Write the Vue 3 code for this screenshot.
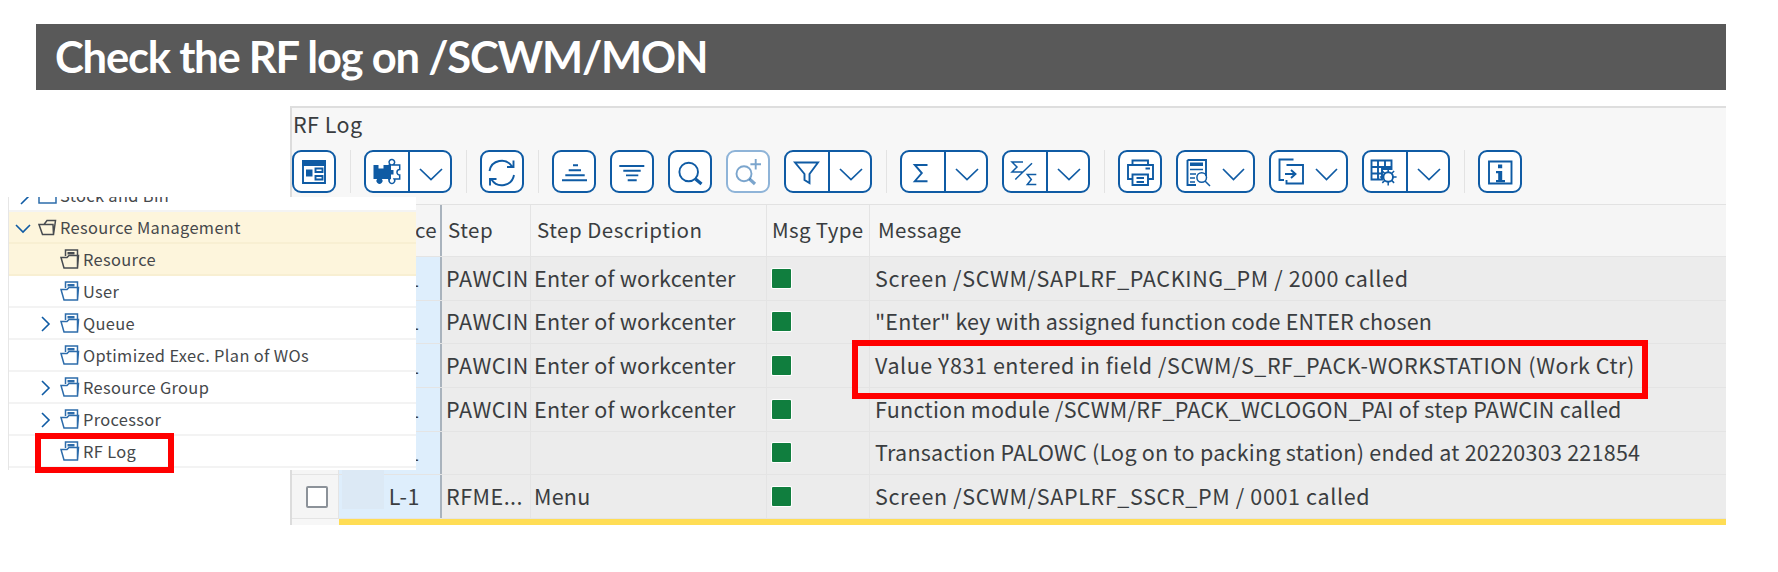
<script setup>
const S = 's', F = 'f'
const icons = {
  layout: [['M11 11h22v22H11z', S], ['M10 10h24v6H10z', F], ['M14 19.5h6.5v7H14z', F], ['M23.5 18.5h7v3.5h-7zM23.5 26h7v3.5h-7z', S]],
  puzzle: [
    ['M9.5 15h5v3.5h5V15h7.5v5h2.5v4.5H27V29h-9.2a3 3 0 1 1-4.6 0H9.5z', F],
    ['M27 15h-2.5M27.7 15a2.8 2.8 0 1 0-2-4.6a2.8 2.8 0 0 0 2 4.6h8v4.5a2.6 2.6 0 0 0 0 5.5V29h-5.5a2.8 2.8 0 1 1-4.6 0H24', 'n'],
  ],
  refresh: [['M9.5 21A12.3 12.3 0 0 1 32 16.5M33.5 10.5V17H27', S], ['M34 25A12.3 12.3 0 0 1 11.5 29.5M10 35.5V29h6.5', S]],
  up: [['M21 15.3h5M16.7 20.3h12.3M13.3 25.3h19.4M10 30.3h25', S]],
  down: [['M9.3 16h25M13.3 20.8h17.4M16 25.4h12.3M17.7 30.3h9', S]],
  search: [['M30 22a9.3 9.3 0 1 1-18.6 0a9.3 9.3 0 1 1 18.6 0z', S], ['M27.5 29l6 5', 't']],
  zoom: [['M25.5 23.7a7.5 7.5 0 1 1-15 0a7.5 7.5 0 1 1 15 0zM29.7 9v10.6M24.4 14.3H35', S], ['M23.5 29l5.5 5', 't']],
  filter: [['M11 12.5h23L25.5 24v9l-5-3v-6z', S]],
  sigma: [['M27.5 15H14.8L21.8 23l-7 8.2h12.7', S]],
  ratio: [['M21 12H10l5 5l-5 5h11M13.3 29.5L30 13.3M34.3 24.5h-9l4 5l-4 5h9', 'n']],
  print: [['M14.5 14.5v-4h15.5v4M14 29h-4V15h25v14h-5M14.5 24.5H30V35H14.5zM18.5 28H26M18.5 32H26', S], ['M27.5 17.5h4.5v2h-4.5z', F]],
  report: [['M11.5 10H30v16M20 35H11.5V10', S], ['M14 12.5h13v3.5H14z', F], ['M14 19.5h13M14 24h6M14 28h5M14 32h5', 'n'], ['M30.5 27.5a4.8 4.8 0 1 1-9.6 0a4.8 4.8 0 1 1 9.6 0zM29 31l5 5', 'n']],
  exportI: [['M24.5 9.5H10.5V30H15M17.5 15H34v18.5H17.5V30M16 24h10M22 20l4.5 4l-4.5 4', S]],
  grid: [['M9.5 10.5h20V19H20v10.5H9.5zM9.5 17h20M9.5 23.5H20M16 10.5v19M23 10.5V17', S], ['M31 27a4.8 4.8 0 1 1-9.6 0a4.8 4.8 0 1 1 9.6 0z', S], ['M26.2 18.5v3.6M26.2 31.8v3.6M17.8 27h3.6M31 27h3.6M20.3 21l2.5 2.5M29.6 30.4l2.5 2.5M32.1 21l-2.5 2.5M22.8 30.4l-2.5 2.5', 'n']],
  info: [['M11 11.5h22.5v22H11z', S], ['M20 14.5h4.2v3.8H20zM18 21h6.2v9H27v2.2h-9V30h2.2v-6.8H18z', F]],
}
const toolbar = [
  { icon: 'layout' }, { sep: true },
  { icon: 'puzzle', split: true }, { sep: true },
  { icon: 'refresh' }, { sep: true },
  { icon: 'up' }, { icon: 'down' }, { icon: 'search' }, { icon: 'zoom', off: true }, { icon: 'filter', split: true }, { sep: true },
  { icon: 'sigma', split: true }, { icon: 'ratio', split: true }, { sep: true },
  { icon: 'print' }, { icon: 'report', menu: true }, { icon: 'exportI', menu: true }, { icon: 'grid', split: true }, { sep: true },
  { icon: 'info' },
]
const rows = [
  { step: 'PAWCIN', desc: 'Enter of workcenter', msg: 'Screen /SCWM/SAPLRF_PACKING_PM / 2000 called', ls: 0.64 },
  { step: 'PAWCIN', desc: 'Enter of workcenter', msg: '"Enter" key with assigned function code ENTER chosen', ls: 0.18 },
  { step: 'PAWCIN', desc: 'Enter of workcenter', msg: 'Value Y831 entered in field /SCWM/S_RF_PACK-WORKSTATION (Work Ctr)', ls: 0.55 },
  { step: 'PAWCIN', desc: 'Enter of workcenter', msg: 'Function module /SCWM/RF_PACK_WCLOGON_PAI of step PAWCIN called', ls: 0.28 },
  { step: '', desc: '', msg: 'Transaction PALOWC (Log on to packing station) ended at 20220303 221854', ls: 0.25 },
  { step: 'RFME...', desc: 'Menu', msg: 'Screen /SCWM/SAPLRF_SSCR_PM / 0001 called', ls: 0.65, box: true },
]
const tree = [
  { label: 'Stock and Bin', lvl: 1, arrow: 'right', kind: 'box' },
  { label: 'Resource Management', lvl: 1, arrow: 'down', kind: 'folder', sel: true },
  { label: 'Resource', lvl: 2, sel: true },
  { label: 'User', lvl: 2 },
  { label: 'Queue', lvl: 2, arrow: 'right' },
  { label: 'Optimized Exec. Plan of WOs', lvl: 2 },
  { label: 'Resource Group', lvl: 2, arrow: 'right' },
  { label: 'Processor', lvl: 2, arrow: 'right' },
  { label: 'RF Log', lvl: 2 },
]
</script>

<template>
  <div class="page">
    <header class="banner"><h1>Check the RF log on /SCWM/MON</h1></header>

    <section class="window">
      <div class="wtitle">RF Log</div>
      <div class="toolbar">
        <template v-for="(b, i) in toolbar" :key="i">
          <span v-if="b.sep" class="sep"></span>
          <div v-else class="btn" :class="{ off: b.off, wide: b.menu, split: b.split }">
            <svg class="ico" viewBox="0 0 44 43" width="44" height="43">
              <path v-for="(p, j) in icons[b.icon]" :key="j" :d="p[0]" :class="p[1]" />
            </svg>
            <svg v-if="b.menu" class="chev menuchev" viewBox="0 0 30 43" width="30" height="43"><path d="M3 19l10.5 10.5L24 19" /></svg>
            <div v-if="b.split" class="drop">
              <svg class="chev" viewBox="0 0 40 39" width="40" height="39"><path d="M10 17l11 10.5L32 17" /></svg>
            </div>
          </div>
        </template>
      </div>

      <div class="table">
        <div class="row head">
          <div class="c c0"></div>
          <div class="c c1">Sequence</div>
          <div class="c c2">Step</div>
          <div class="c c3">Step Description</div>
          <div class="c c4">Msg Type</div>
          <div class="c c5">Message</div>
        </div>
        <div v-for="(r, i) in rows" :key="i" class="row">
          <div class="c c0"><span v-if="r.box" class="check"></span></div>
          <div class="c c1">L-1</div>
          <div class="c c2">{{ r.step }}</div>
          <div class="c c3">{{ r.desc }}</div>
          <div class="c c4"><span class="led"></span></div>
          <div class="c c5" :style="{ letterSpacing: r.ls + 'px' }">{{ r.msg }}</div>
        </div>
        <div class="endline"></div>
      </div>
      <div class="patch"></div>
    </section>

    <aside class="tree">
      <div v-for="t in tree" :key="t.label" class="node" :class="{ sel: t.sel, l2: t.lvl === 2 }">
        <svg v-if="t.arrow === 'down'" class="arrow adown" viewBox="0 0 16 10" width="16" height="10"><path d="M1 1l7 7l7-7" /></svg>
        <svg v-if="t.arrow === 'right'" class="arrow aright" viewBox="0 0 10 16" width="10" height="16"><path d="M1 1l7 7l-7 7" /></svg>
        <svg v-if="t.kind === 'box'" class="fold f1" viewBox="0 0 19 18" width="19" height="18"><path d="M1 1h17v16H1z" /></svg>
        <svg v-else-if="t.kind === 'folder'" class="fold f1" viewBox="0 0 19 18" width="19" height="18"><path d="M1 6.5h5l3-4h8.5l-2 14H4.5zM6 6.5h9l.5 10" /></svg>
        <svg v-else class="fold" viewBox="0 0 20 20" width="20" height="20"><path d="M5.5 7V1h12v17M1 8.5h6l2-2h9.5L17.5 19H4z" /><path class="band" d="M7.5 3h7v2.5h-7z" /></svg>
        <span class="lbl">{{ t.label }}</span>
      </div>
    </aside>

    <div class="mark mark-log"></div>
    <div class="mark mark-msg"></div>
  </div>
</template>

<style scoped>
.page { position: relative; width: 1778px; height: 572px; background: #fff; overflow: hidden; font-family: "Noto Sans CJK JP", "Noto Sans", sans-serif; color: #3a3d40; }
.banner { margin: 24px 52px 0 36px; height: 66px; background: #595959; display: flex; align-items: center; padding-left: 19px; }
.banner h1 { margin: 0; font: 700 43.5px/1 Lato, sans-serif; color: #fff; letter-spacing: -1.2px; }
.window { position: relative; margin: 16px 52px 0 290px; border-top: 2px solid #dedede; border-left: 2px solid #dcdcdc; background: #f7f7f7; height: 417px; }
.wtitle { height: 42px; padding-left: 1px; font-size: 21.5px; line-height: 31px; letter-spacing: 0.45px; }
.toolbar { display: flex; gap: 14px; height: 43px; }
.sep { width: 1px; margin-right: -1px; background: #e3e3e3; }
.btn { box-sizing: border-box; flex: none; width: 44px; height: 43px; display: flex; border: 2px solid #0f5ba4; border-radius: 9px; background: #fff; }
.btn.split { width: 88px; }
.btn.wide { width: 79px; }
.btn.off { border-color: #8fb4d8; }
.btn.off .ico path { opacity: 0.55; }
.ico { margin: -2px 0 -2px -2px; flex: none; }
.ico path { fill: none; stroke: #0f5ba4; stroke-width: 1.9; }
.ico path.n { stroke-width: 1.5; }
.ico path.t { stroke-width: 3.2; }
.ico path.f { fill: #0f5ba4; stroke: none; }
.chev { flex: none; display: block; }
.chev path { fill: none; stroke: #0f5ba4; stroke-width: 1.7; }
.menuchev { margin: -2px 0; }
.drop { box-sizing: border-box; width: 42px; height: 39px; border-left: 2px solid #0f5ba4; }
.table { margin-top: 11px; border-top: 1px solid #e2e2e2; }
.row { display: flex; height: 43.67px; box-sizing: border-box; background: #ececec; border-bottom: 1px solid #e4e4e4; font-size: 21.5px; letter-spacing: 0.5px; }
.row.head { height: 52px; background: #f5f5f5; font-size: 20.5px; letter-spacing: 0.35px; }
.c { box-sizing: border-box; display: flex; align-items: center; white-space: nowrap; border-right: 1px solid #e4e4e4; padding-bottom: 2px; }
.c0 { width: 47px; background: #f5f5f5; justify-content: center; padding: 0 0 0 3px; }
.c1 { width: 103px; background: #deeefc; justify-content: flex-end; padding-right: 20px; border-right: 2px solid #a9b3bd; }
.c2 { width: 89px; padding-left: 4px; }
.c3 { width: 236px; padding-left: 3px; letter-spacing: 0.25px; }
.c4 { width: 103px; padding: 0 0 0 5px; }
.c5 { flex: 1; padding-left: 5px; border-right: 0; }
.head .c { padding-bottom: 3px; }
.head .c1 { background: #f5f5f5; padding-right: 3px; }
.head .c2, .head .c3 { padding-left: 6px; letter-spacing: 0.5px; }
.head .c5 { padding-left: 8px; }
.check { width: 22px; height: 22px; box-sizing: border-box; background: #fff; border: 2px solid #8c9299; border-radius: 2px; }
.led { width: 19px; height: 19px; background: #107e3e; border-radius: 1px; box-shadow: 0 0 0 1px #fff; }
.endline { height: 6px; margin-left: 47px; background: #ffdd55; }
.patch { position: absolute; left: 50px; top: 362px; width: 42px; height: 39px; background: #dce9f5; }
.tree { position: absolute; left: 8px; top: 197px; width: 408px; height: 273px; background: #fff; overflow: hidden; border-left: 1px solid #e6e6e6; box-sizing: border-box; }
.node { position: relative; height: 32px; box-sizing: border-box; border-bottom: 2px solid #f3f3f3; display: flex; align-items: center; padding-left: 29px; font-size: 16.4px; letter-spacing: 0.35px; color: #45484b; }
.node:first-child { margin-top: -17px; }
.node.l2 { padding-left: 51px; }
.node.sel { background: #fdf5dc; border-bottom-color: #f8efd2; }
.arrow { position: absolute; fill: none; stroke: #0f5ba4; stroke-width: 1.6; }
.adown { left: 6px; top: 12px; }
.aright { left: 32px; top: 8px; }
.node:first-child .aright { left: 11px; top: 9px; }
.fold { flex: none; margin-right: 3px; fill: none; stroke: #2d6cab; stroke-width: 1.5; }
.fold .band { fill: #2d6cab; stroke: none; }
.sel .fold { stroke: #474b50; }
.sel .fold .band { fill: #474b50; }
.lbl { white-space: nowrap; }
.mark { position: absolute; box-sizing: border-box; border: 6px solid #ff0000; }
.mark-log { left: 35px; top: 433px; width: 139px; height: 40px; }
.mark-msg { left: 852px; top: 340px; width: 796px; height: 59px; }
</style>
